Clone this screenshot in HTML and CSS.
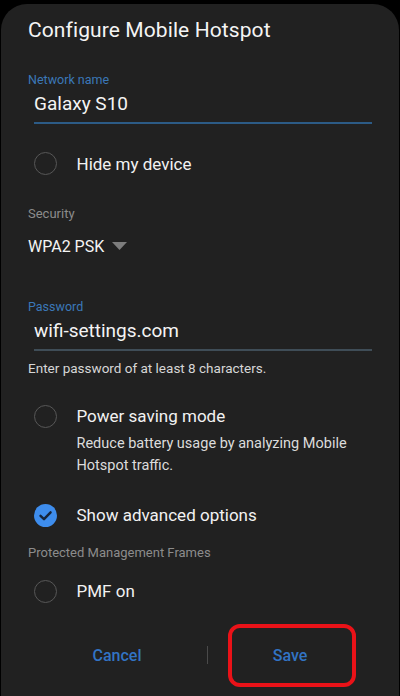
FILE: index.html
```html
<!DOCTYPE html>
<html lang="en">
<head>
<meta charset="utf-8">
<title>Configure Mobile Hotspot</title>
<link rel="stylesheet" href="styles.css">
</head>
<body>
<div class="dialog">
  <h1 class="title">Configure Mobile Hotspot</h1>

  <div class="field field-name">
    <div class="field-label">Network name</div>
    <div class="field-input">Galaxy S10</div>
  </div>

  <div class="option option-hide">
    <span class="radio"></span>
    <div class="option-body"><div class="option-title">Hide my device</div></div>
  </div>

  <div class="section-label label-security">Security</div>
  <div class="select">
    <span class="select-value">WPA2 PSK</span>
    <svg class="select-arrow" width="15" height="8" viewBox="0 0 15 8"><path d="M0 0H15L7.5 8Z" fill="#7d7d7d"/></svg>
  </div>

  <div class="field field-pass">
    <div class="field-label">Password</div>
    <div class="field-input input-muted">wifi-settings.com</div>
  </div>
  <div class="helper">Enter password of at least 8 characters.</div>

  <div class="option option-power">
    <span class="radio"></span>
    <div class="option-body">
      <div class="option-title">Power saving mode</div>
      <div class="option-desc">Reduce battery usage by analyzing Mobile Hotspot traffic.</div>
    </div>
  </div>

  <div class="option option-adv">
    <span class="radio checked">
      <svg width="23" height="23" viewBox="0 0 23 23"><path d="M6.5 11.8L10 15.2L16.6 8.3" fill="none" stroke="#16243a" stroke-width="2.4" stroke-linecap="round" stroke-linejoin="round"/></svg>
    </span>
    <div class="option-body"><div class="option-title">Show advanced options</div></div>
  </div>

  <div class="section-label label-pmf">Protected Management Frames</div>
  <div class="option option-pmf">
    <span class="radio"></span>
    <div class="option-body"><div class="option-title">PMF on</div></div>
  </div>

  <div class="actions">
    <button class="btn btn-cancel">Cancel</button>
    <span class="divider"></span>
    <button class="btn btn-save">Save</button>
  </div>
</div>
</body>
</html>
```
FILE: styles.css
```css
* { box-sizing: border-box; }

html, body {
  margin: 0;
  padding: 0;
  background: #000;
  height: 696px;
  overflow: hidden;
}

body {
  font-family: Roboto, "Noto Sans", "Liberation Sans", sans-serif;
  color: #f2f2f2;
}

.dialog {
  margin: 4px 1px 0;
  height: 720px;
  background: #212121;
  border-radius: 26px;
  padding: 0 27px;
  display: flex;
  flex-direction: column;
}

.title {
  margin: 12px 0 0;
  font-size: 21px;
  font-weight: 400;
  line-height: 28px;
  color: #f4f4f4;
  letter-spacing: 0.1px;
}

/* text fields */
.field-label {
  font-size: 12.5px;
  line-height: 14px;
  color: #3b78b8;
}
.field-input {
  margin: 5px 0 0 6px;
  padding-bottom: 6px;
  font-size: 19px;
  line-height: 24px;
  color: #f4f4f4;
  border-bottom: 2px solid #2c5b86;
}
.input-muted { border-bottom-color: #3f4d57; }

.field-name { margin-top: 29px; }
.field-pass { margin-top: 42px; }

.helper {
  margin-top: 9px;
  font-size: 13.5px;
  line-height: 16px;
  color: #d6d6d6;
}

/* radio / check rows */
.option {
  display: flex;
  align-items: flex-start;
}
.radio {
  flex: none;
  width: 23px;
  height: 23px;
  margin: 0.5px 0 0 5.5px;
  border-radius: 50%;
  border: 1.5px solid #575757;
}
.radio.checked {
  border: none;
  background: #3e8ded;
}
.radio svg { display: block; }

.option-body { margin-left: 20px; }
.option-title {
  font-size: 17px;
  line-height: 24px;
  color: #f2f2f2;
}
.option-desc {
  margin-top: 5px;
  font-size: 14.5px;
  line-height: 22px;
  color: #dcdcdc;
  max-width: 280px;
}

.option-hide { margin-top: 28px; }
.option-hide .radio { margin-top: 0; }
.option-power { margin-top: 28px; }
.option-adv { margin-top: 26px; }
.option-pmf { margin-top: 18px; }

.section-label {
  font-size: 13px;
  line-height: 16px;
  color: #8c8c8c;
}
.label-security { margin-top: 30px; }
.label-pmf { margin-top: 18px; }

.select {
  margin-top: 12px;
  display: flex;
  align-items: center;
  height: 24px;
}
.select-value {
  font-size: 16px;
  color: #f4f4f4;
}
.select-arrow { margin-left: 8px; }

/* bottom buttons */
.actions {
  margin-top: 22px;
  height: 60px;
  display: flex;
  align-items: center;
}
.btn {
  height: 60px;
  border: none;
  background: none;
  font-family: inherit;
  font-size: 16px;
  font-weight: 500;
  color: #3274c4;
  padding: 0;
  position: relative;
}
.btn-cancel { width: 178px; }
.btn-save { width: 162px; margin-left: 1px; }
.divider {
  width: 1px;
  height: 18px;
  background: #4a4a4a;
  margin-left: 1px;
}

/* highlight ring around the save action */
.btn-save::after {
  content: "";
  position: absolute;
  left: 19px;
  right: 15px;
  top: -1px;
  bottom: -2px;
  border: 4px solid #ea1218;
  border-radius: 12px;
}
```
